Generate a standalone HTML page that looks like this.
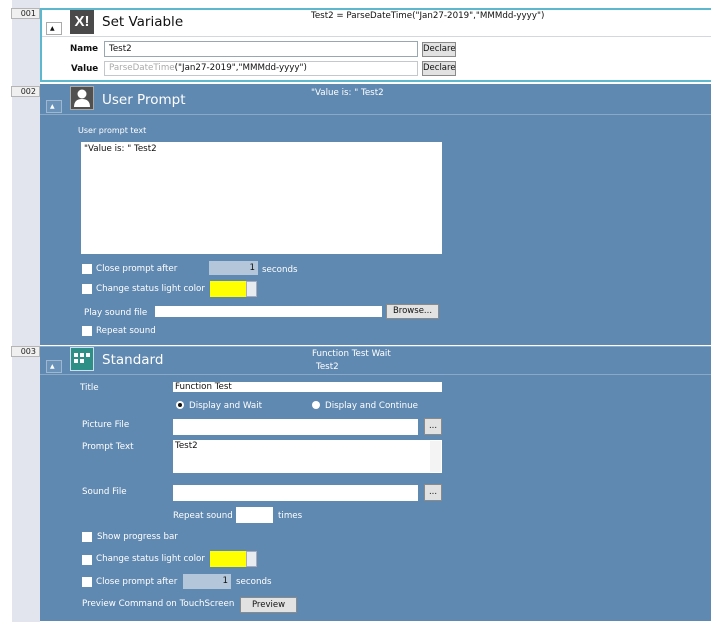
<!DOCTYPE html>
<html><head><meta charset="utf-8"><style>
*{box-sizing:border-box;margin:0;padding:0}
body{width:711px;height:632px;background:#fff;position:relative;overflow:hidden;font-family:"DejaVu Sans","Liberation Sans",sans-serif;font-size:8.7px;color:#111}
.a{position:absolute}
.gut{left:12px;top:0;width:28px;height:622px;background:#e3e5ee}
.num{width:29px;height:11px;background:#f0f0f0;border:1px solid #b5b5b5;font-size:8px;text-align:right;padding-right:3px;line-height:9px;color:#222;left:11px}
.blue{background:#6089b1;left:40px;width:671px}
.w{color:#fff}
.inp{background:#fff;border:1px solid #9aa6b2}
.btn{background:#e2e2e2;border:1px solid #8a8a8a;font-size:8.5px;text-align:center;color:#111}
.cb{width:10px;height:10px;background:#fff}
.col{width:16px;height:13px;background:#fff;border:1px solid #aaa;font-size:6px;line-height:11px;padding-left:3px}
.hdr{font-size:13.5px;font-family:"DejaVu Sans",sans-serif}
.sep{height:1px;background:#89a9c8;left:40px;width:671px}
.gr{background:#b4c6d9}
.yel{background:#ffff00}
.dd{background:#e8ecf0;border:1px solid #aab;width:11px}
</style></head><body>
<div class="a gut"></div>
<div class="a num" style="top:8px">001</div>
<div class="a num" style="top:86px">002</div>
<div class="a num" style="top:346px">003</div>

<div class="a" style="left:40px;top:8px;width:671px;height:74px;background:#fff;border:2px solid #5cb7cf;border-right:none"></div>
<div class="a" style="left:42px;top:36px;width:669px;height:1px;background:#d4d8dc"></div>
<div class="a col" style="left:46px;top:22px">▲</div>
<div class="a" style="left:70px;top:10px;width:24px;height:24px;background:#4a4a4a;color:#fff;font-weight:bold;font-size:15px;line-height:24px;text-align:center;font-family:'Liberation Sans',sans-serif">X!</div>
<div class="a hdr" style="left:102px;top:14px">Set Variable</div>
<div class="a" style="left:311px;top:11px">Test2 = ParseDateTime("Jan27-2019","MMMdd-yyyy")</div>
<div class="a" style="left:70px;top:44px;font-weight:bold">Name</div>
<div class="a inp" style="left:104px;top:41px;width:314px;height:16px;padding:2px 4px">Test2</div>
<div class="a btn" style="left:422px;top:42px;width:34px;height:15px;line-height:13px">Declare</div>
<div class="a" style="left:71px;top:64px;font-weight:bold">Value</div>
<div class="a inp" style="left:104px;top:61px;width:314px;height:15px;padding:1px 4px;border-color:#c4c8cc"><span style="color:#aaa">ParseDateTime</span>("Jan27-2019","MMMdd-yyyy")</div>
<div class="a btn" style="left:422px;top:61px;width:34px;height:15px;line-height:13px">Declare</div>

<div class="a blue" style="top:84px;height:261px"></div>
<div class="a col" style="left:46px;top:100px;background:#6b93b9;border-color:#9fb8d0;color:#fff">▲</div>
<div class="a" style="left:70px;top:86px;width:24px;height:24px;background:#505050;border:1px solid #aaa">
<svg width="22" height="22" viewBox="0 0 22 22"><circle cx="11" cy="7" r="4.5" fill="#fff"/><path d="M3 20 Q3 12 11 12 Q19 12 19 20 Z" fill="#fff"/></svg></div>
<div class="a hdr w" style="left:102px;top:92px">User Prompt</div>
<div class="a w" style="left:311px;top:88px">"Value is: " Test2</div>
<div class="a sep" style="top:114px"></div>
<div class="a w" style="left:78px;top:126px;font-size:8px">User prompt text</div>
<div class="a inp" style="left:81px;top:142px;width:361px;height:112px;padding:2px 3px;border:none">"Value is: " Test2</div>
<div class="a cb" style="left:82px;top:264px"></div>
<div class="a w" style="left:96px;top:264px">Close prompt after</div>
<div class="a gr" style="left:209px;top:261px;width:49px;height:14px;text-align:right;padding-right:3px;line-height:14px">1</div>
<div class="a w" style="left:262px;top:265px">seconds</div>
<div class="a cb" style="left:82px;top:284px"></div>
<div class="a w" style="left:96px;top:284px">Change status light color</div>
<div class="a yel" style="left:210px;top:281px;width:36px;height:16px"></div>
<div class="a dd" style="left:246px;top:281px;height:16px"></div>
<div class="a w" style="left:84px;top:308px">Play sound file</div>
<div class="a" style="left:155px;top:306px;width:227px;height:11px;background:#fff"></div>
<div class="a btn" style="left:386px;top:304px;width:53px;height:15px;line-height:13px">Browse...</div>
<div class="a cb" style="left:82px;top:326px"></div>
<div class="a w" style="left:96px;top:326px">Repeat sound</div>

<div class="a blue" style="top:346px;height:275px"></div>
<div class="a sep" style="top:346px"></div>
<div class="a col" style="left:46px;top:360px;background:#6b93b9;border-color:#9fb8d0;color:#fff">▲</div>
<div class="a" style="left:70px;top:347px;width:24px;height:24px;background:#2e8f86;border:1px solid #cde">
<svg width="22" height="22" viewBox="0 0 22 22" fill="#fff"><rect x="3" y="5" width="4" height="4"/><rect x="9" y="5" width="4" height="4"/><rect x="15" y="5" width="4" height="4"/><rect x="3" y="11" width="4" height="4"/><rect x="9" y="11" width="4" height="4"/></svg></div>
<div class="a hdr w" style="left:102px;top:352px">Standard</div>
<div class="a w" style="left:312px;top:349px">Function Test Wait</div>
<div class="a w" style="left:316px;top:362px">Test2</div>
<div class="a sep" style="top:374px"></div>
<div class="a w" style="left:80px;top:383px">Title</div>
<div class="a" style="left:173px;top:382px;width:269px;height:10px;background:#fff;line-height:10px;padding-left:2px">Function Test</div>
<div class="a" style="left:176px;top:401px;width:8px;height:8px;border-radius:50%;background:#fff"><div style="margin:2px;width:4px;height:4px;border-radius:50%;background:#111"></div></div>
<div class="a w" style="left:189px;top:401px">Display and Wait</div>
<div class="a" style="left:312px;top:401px;width:8px;height:8px;border-radius:50%;background:#fff"></div>
<div class="a w" style="left:325px;top:401px">Display and Continue</div>
<div class="a w" style="left:82px;top:420px">Picture File</div>
<div class="a" style="left:173px;top:419px;width:245px;height:16px;background:#fff"></div>
<div class="a btn" style="left:424px;top:418px;width:18px;height:17px;line-height:15px">...</div>
<div class="a w" style="left:82px;top:442px">Prompt Text</div>
<div class="a" style="left:173px;top:440px;width:269px;height:33px;background:#fff;padding:1px 2px">Test2</div>
<div class="a" style="left:430px;top:441px;width:11px;height:31px;background:#f4f4f4"></div>
<div class="a w" style="left:82px;top:487px">Sound File</div>
<div class="a" style="left:173px;top:485px;width:245px;height:16px;background:#fff"></div>
<div class="a btn" style="left:424px;top:484px;width:18px;height:17px;line-height:15px">...</div>
<div class="a w" style="left:173px;top:511px">Repeat sound</div>
<div class="a" style="left:236px;top:507px;width:37px;height:16px;background:#fff"></div>
<div class="a w" style="left:278px;top:511px">times</div>
<div class="a cb" style="left:82px;top:532px"></div>
<div class="a w" style="left:97px;top:532px">Show progress bar</div>
<div class="a cb" style="left:82px;top:555px"></div>
<div class="a w" style="left:96px;top:554px">Change status light color</div>
<div class="a yel" style="left:210px;top:551px;width:36px;height:16px"></div>
<div class="a dd" style="left:246px;top:551px;height:16px"></div>
<div class="a cb" style="left:82px;top:577px"></div>
<div class="a w" style="left:96px;top:577px">Close prompt after</div>
<div class="a gr" style="left:183px;top:574px;width:48px;height:15px;text-align:right;padding-right:3px;line-height:15px">1</div>
<div class="a w" style="left:236px;top:577px">seconds</div>
<div class="a w" style="left:82px;top:599px">Preview Command on TouchScreen</div>
<div class="a btn" style="left:240px;top:597px;width:57px;height:16px;line-height:14px">Preview</div>
</body></html>
